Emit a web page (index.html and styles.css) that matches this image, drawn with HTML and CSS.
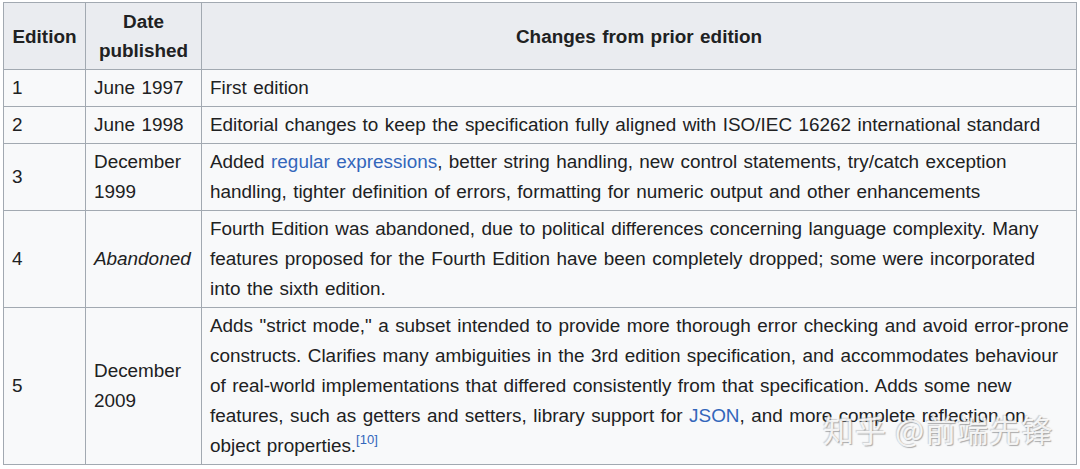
FILE: index.html
```html
<!DOCTYPE html>
<html>
<head>
<meta charset="utf-8">
<link rel="stylesheet" href="styles.css">
</head>
<body>
<div class="wrap">
<table class="wikitable">
  <colgroup>
    <col class="c1"><col class="c2"><col class="c3">
  </colgroup>
  <thead>
    <tr>
      <th>Edition</th>
      <th>Date<br>published</th>
      <th>Changes from prior edition</th>
    </tr>
  </thead>
  <tbody>
    <tr>
      <td>1</td>
      <td>June 1997</td>
      <td>First edition</td>
    </tr>
    <tr>
      <td>2</td>
      <td>June 1998</td>
      <td>Editorial changes to keep the specification fully aligned with ISO/IEC 16262 international standard</td>
    </tr>
    <tr>
      <td>3</td>
      <td>December 1999</td>
      <td>Added <a class="link">regular expressions</a>, better string handling, new control statements, try/catch exception handling, tighter definition of errors, formatting for numeric output and other enhancements</td>
    </tr>
    <tr>
      <td>4</td>
      <td><i>Abandoned</i></td>
      <td>Fourth Edition was abandoned, due to political differences concerning language complexity. Many features proposed for the Fourth Edition have been completely dropped; some were incorporated into the sixth edition.</td>
    </tr>
    <tr>
      <td>5</td>
      <td>December 2009</td>
      <td>Adds "strict mode," a subset intended to provide more thorough error checking and avoid error-prone constructs. Clarifies many ambiguities in the 3rd edition specification, and accommodates behaviour of real-world implementations that differed consistently from that specification. Adds some new features, such as getters and setters, library support for <a class="link">JSON</a>, and more complete reflection on object properties.<sup class="ref">[10]</sup></td>
    </tr>
  </tbody>
</table>
<div class="watermark">知乎 @前端先锋</div>
</div>
</body>
</html>
```

FILE: styles.css
```css
html, body {
  margin: 0;
  padding: 0;
  background: #ffffff;
}
body {
  padding: 2px 3px 0 3px;
  font-family: "Liberation Sans", Arial, sans-serif;
  color: #202122;
}
.wrap {
  position: relative;
  width: 1074px;
}
.wikitable {
  border-collapse: collapse;
  width: 1074px;
  table-layout: fixed;
  font-size: 18.9px;
  word-spacing: 1.2px;
  background: #f8f9fa;
  border: 1px solid #a2a9b1;
}
.c1 { width: 82px; }
.c2 { width: 116px; }
.c3 { width: auto; }
.wikitable th,
.wikitable td {
  border: 1px solid #a2a9b1;
  padding: 3px 6px 3px 8px;
  line-height: 30px;
  vertical-align: middle;
}
.wikitable th {
  background: #eaecf0;
  font-weight: bold;
  text-align: center;
  line-height: 29px;
  padding: 4px 4px;
}
.wikitable td {
  text-align: left;
}
.link {
  color: #3366bb;
  text-decoration: none;
}
.ref {
  color: #3366bb;
  font-size: 13px;
  line-height: 1;
  vertical-align: 8px;
  word-spacing: 0;
}
.watermark {
  position: absolute;
  left: 820px;
  top: 404px;
  font-family: "Noto Sans CJK SC", sans-serif;
  font-size: 31px;
  color: rgba(255, 255, 255, 0.85);
  text-shadow: 1px 1px 1px rgba(120, 120, 120, 0.6), -1px -1px 1px rgba(150, 150, 150, 0.4);
  letter-spacing: 1px;
  white-space: nowrap;
}
```
